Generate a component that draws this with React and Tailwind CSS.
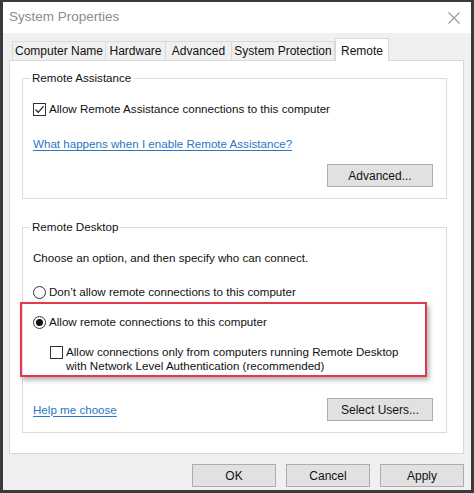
import React from 'react';

const font = { fontFamily: '"Liberation Sans", Arial, sans-serif' };

function CloseIcon() {
  return (
    <svg width="12" height="12" viewBox="0 0 12 12" className="text-[#9a9a9a]">
      <path d="M0.5 0.5 L11.5 11.5 M11.5 0.5 L0.5 11.5" stroke="currentColor" strokeWidth="1.1" fill="none" />
    </svg>
  );
}

function Checkbox({ checked }) {
  return (
    <span className="flex h-[13px] w-[13px] shrink-0 items-center justify-center border border-[#333] bg-white">
      {checked ? (
        <svg width="11" height="11" viewBox="0 0 11 11">
          <path d="M1.5 5.5 L4.2 8.3 L9.6 2.2" stroke="#222" strokeWidth="1.2" fill="none" />
        </svg>
      ) : null}
    </span>
  );
}

function Radio({ checked }) {
  return (
    <span className="flex h-[13px] w-[13px] shrink-0 items-center justify-center rounded-full border border-[#333] bg-white">
      {checked ? <span className="h-[7px] w-[7px] rounded-full bg-[#111]" /> : null}
    </span>
  );
}

function Button({ children, className = '' }) {
  return (
    <button
      type="button"
      className={`flex h-[23px] items-center justify-center border border-[#adadad] bg-[#e1e1e1] text-[12px] text-[#111] ${className}`}
    >
      {children}
    </button>
  );
}

function Tab({ label, width, active }) {
  if (active) {
    return (
      <div
        className="relative z-10 -mb-px flex h-[23px] items-start justify-center border border-b-0 border-[#d9d9d9] bg-white pt-[3px]"
        style={{ width }}
      >
        {label}
      </div>
    );
  }
  return (
    <div
      className="flex h-[19px] items-center justify-center border border-b-0 border-l-0 border-[#d9d9d9] bg-[#f0f0f0] first:border-l"
      style={{ width }}
    >
      {label}
    </div>
  );
}

export default function App() {
  return (
    <div className="h-[493px] w-[474px] bg-[#3b3b3b] pb-[3px] pl-[3px] pr-[3px] pt-[2px]" style={font}>
      <div className="flex h-full flex-col">
        <div className="flex h-[31px] items-center justify-between bg-white pl-[6px] pr-[11px]">
          <span className="text-[13.5px] text-[#8c8c8c]">System Properties</span>
          <CloseIcon />
        </div>

        <div className="flex flex-1 flex-col bg-[#f0f0f0] px-[6px] text-[11.6px] text-[#111]">
          <div className="ml-[3px] mt-[5px] flex items-end text-[12px]">
            <Tab label="Computer Name" width={94} />
            <Tab label="Hardware" width={60} />
            <Tab label="Advanced" width={66} />
            <Tab label="System Protection" width={103} />
            <Tab label="Remote" width={54} active />
          </div>

          <div className="flex h-[394px] w-[455px] flex-col border border-[#d9d9d9] bg-white pl-[12px]">
            <fieldset className="mt-[9px] w-[425px] border border-[#dcdcdc] pb-[11px] pl-[10px] pr-[13px]">
              <legend className="ml-[-3px] px-[2px] leading-[16px]">Remote Assistance</legend>
              <div className="mt-[15px] flex h-[16px] items-center gap-[3px]">
                <Checkbox checked />
                <span>Allow Remote Assistance connections to this computer</span>
              </div>
              <div className="mt-[19px] h-[16px] leading-[16px] text-[#2a76c4] underline underline-offset-2">
                What happens when I enable Remote Assistance?
              </div>
              <div className="mt-[12px] flex justify-end">
                <Button className="w-[106px]">Advanced...</Button>
              </div>
            </fieldset>

            <fieldset className="mt-[20px] w-[425px] border border-[#dcdcdc] pb-[11px] pl-[10px] pr-[13px]">
              <legend className="ml-[-3px] px-[2px] leading-[16px]">Remote Desktop</legend>
              <div className="mt-[15px] h-[16px] leading-[16px]">Choose an option, and then specify who can connect.</div>
              <div className="mt-[18px] flex h-[16px] items-center gap-[3px]">
                <Radio />
                <span>Don’t allow remote connections to this computer</span>
              </div>
              <div className="ml-[-13px] mt-[2px] w-[407px] border-2 border-[#e23a4b] pb-[2px] pl-[11px] pt-[10px] shadow-[2px_3px_5px_rgba(0,0,0,0.32)]">
                <div className="flex h-[16px] items-center gap-[3px]">
                  <Radio checked />
                  <span>Allow remote connections to this computer</span>
                </div>
                <div className="ml-[17px] mt-[15px] flex items-start gap-[3px]">
                  <span className="mt-[1px]">
                    <Checkbox />
                  </span>
                  <span className="leading-[14px]">
                    Allow connections only from computers running Remote Desktop
                    <br />
                    with Network Level Authentication (recommended)
                  </span>
                </div>
              </div>
              <div className="mt-[21px] flex items-center justify-between">
                <span className="text-[#2a76c4] underline underline-offset-2">Help me choose</span>
                <Button className="w-[106px]">Select Users...</Button>
              </div>
            </fieldset>
          </div>

          <div className="mt-[10px] flex justify-end gap-[10px] pr-[1px]">
            <Button className="w-[84px]">OK</Button>
            <Button className="w-[84px]">Cancel</Button>
            <Button className="w-[84px]">Apply</Button>
          </div>
        </div>
      </div>
    </div>
  );
}
